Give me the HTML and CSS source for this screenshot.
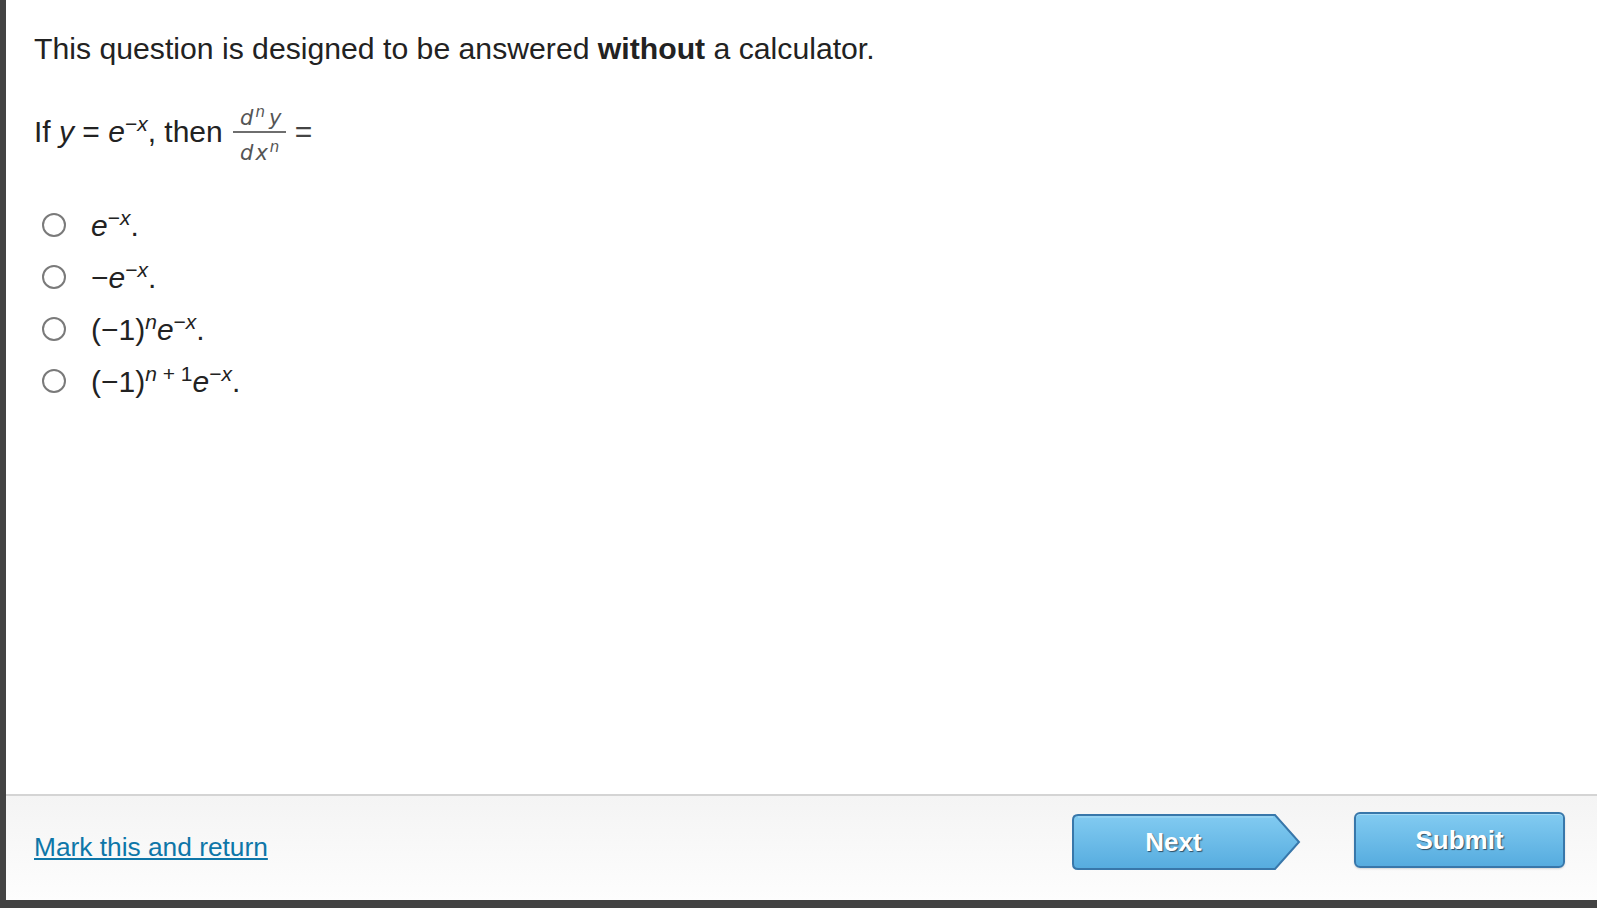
FILE: index.html
```html
<!DOCTYPE html>
<html>
<head>
<meta charset="utf-8">
<link rel="stylesheet" href="styles.css">
</head>
<body>
<div class="page">
  <main class="content">
    <p class="prompt">This question is designed to be answered <b>without</b> a calculator.</p>
    <p class="question">If <i>y</i> = <i>e</i><sup class="sup">−<i>x</i></sup>, then <span class="frac"><span class="num"><i>d</i><sup class="fsup"><i>n</i></sup><i>y</i></span><span class="den"><i>dx</i><sup class="fsup"><i>n</i></sup></span></span> <span class="eq">=</span></p>
    <ul class="options">
      <li class="option"><span class="radio"></span><span class="otext"><i>e</i><sup class="sup">−<i>x</i></sup>.</span></li>
      <li class="option"><span class="radio"></span><span class="otext">−<i>e</i><sup class="sup">−<i>x</i></sup>.</span></li>
      <li class="option"><span class="radio"></span><span class="otext">(−1)<sup class="sup"><i>n</i></sup><i>e</i><sup class="sup">−<i>x</i></sup>.</span></li>
      <li class="option"><span class="radio"></span><span class="otext">(−1)<sup class="sup"><i>n</i> + 1</sup><i>e</i><sup class="sup">−<i>x</i></sup>.</span></li>
    </ul>
  </main>
  <footer class="footer">
    <a class="mark" href="#">Mark this and return</a>
    <div class="buttons">
      <button class="btn next">
        <svg class="next-shape" width="229" height="56" viewBox="0 0 229 56">
          <defs>
            <linearGradient id="g1" x1="0" y1="0" x2="0" y2="1">
              <stop offset="0" stop-color="#82cbf1"/>
              <stop offset="1" stop-color="#56acdf"/>
            </linearGradient>
          </defs>
          <path d="M6 1 H203 L227 28 L203 55 H6 Q1 55 1 50 V6 Q1 1 6 1 Z" fill="url(#g1)" stroke="#3877aa" stroke-width="2"/>
          <path d="M6 3 H201" stroke="#a8dcf6" stroke-width="1.2"/>
        </svg>
        <span class="label">Next</span>
      </button>
      <button class="btn submit"><span class="label">Submit</span></button>
    </div>
  </footer>
</div>
</body>
</html>
```

FILE: styles.css
```css
html, body {
  margin: 0;
  padding: 0;
  background: #ffffff;
}
body {
  font-family: "Liberation Sans", Arial, Helvetica, sans-serif;
  color: #222222;
}
.page {
  width: 1597px;
  height: 908px;
  box-sizing: border-box;
  border-left: 6px solid #434343;
  border-bottom: 8px solid #434343;
  display: flex;
  flex-direction: column;
}
.content {
  flex: 1;
  padding: 31px 28px 0 28px;
}
.prompt {
  margin: 0;
  font-size: 30.2px;
  line-height: 36px;
}
.question {
  margin: 40px 0 0 0;
  font-size: 30px;
  line-height: 36px;
}
.sup {
  font-size: 21px;
  vertical-align: 0;
  position: relative;
  top: -11px;
  line-height: 0;
}
.frac {
  display: inline-flex;
  flex-direction: column;
  align-items: stretch;
  vertical-align: 17px;
  margin-left: 2px;
  color: #555555;
  font-family: "DejaVu Sans", "Liberation Sans", sans-serif;
  font-size: 21px;
  line-height: 22px;
  letter-spacing: 2px;
}
.num {
  padding: 0 3px 2px 7px;
  border-bottom: 2px solid #6e6e6e;
  text-align: center;
}
.den {
  padding: 9px 0 0 4px;
  text-align: center;
}
.fsup {
  font-size: 15px;
  vertical-align: 0;
  position: relative;
  top: -8px;
  line-height: 0;
  margin-right: 2px;
}
.eq {
  color: #444444;
}
.options {
  list-style: none;
  margin: 35px 0 0 0;
  padding: 0;
}
.option {
  display: flex;
  align-items: center;
  height: 52px;
  font-size: 30px;
}
.radio {
  width: 20px;
  height: 20px;
  border: 2px solid #7a7a7a;
  border-radius: 50%;
  margin-left: 8px;
  margin-right: 25px;
  flex: none;
}
.otext {
  line-height: 36px;
  padding-top: 2px;
}
.footer {
  height: 104px;
  border-top: 2px solid #d4d4d4;
  background: linear-gradient(#f4f4f4, #fdfdfd);
  display: flex;
  align-items: flex-start;
  justify-content: space-between;
  padding: 0 32px 0 28px;
}
.mark {
  margin-top: 21px;
  font-size: 26.3px;
  line-height: 60px;
  color: #0e76a8;
  text-decoration: underline;
  text-decoration-thickness: 2px;
  text-underline-offset: 2px;
}
.buttons {
  display: flex;
  align-items: flex-start;
  gap: 53px;
  margin-top: 16px;
}
.btn {
  font-family: "Liberation Sans", Arial, Helvetica, sans-serif;
  font-weight: bold;
  font-size: 26px;
  color: #ffffff;
  text-shadow: 1px 1px 1px #2d4e66;
  padding: 0;
  cursor: pointer;
}
.next {
  position: relative;
  width: 229px;
  height: 56px;
  border: none;
  background: transparent;
  margin-top: 2px;
}
.next-shape {
  position: absolute;
  left: 0;
  top: 0;
}
.next .label {
  position: relative;
  display: block;
  width: 203px;
  text-align: center;
}
.submit {
  width: 211px;
  height: 56px;
  border: 2px solid #3877aa;
  border-radius: 6px;
  background: linear-gradient(#82cbf1, #56acdf);
  box-shadow: inset 0 1px 0 #a8dcf6, 0 1px 2px rgba(0,0,0,0.15);
}
```
